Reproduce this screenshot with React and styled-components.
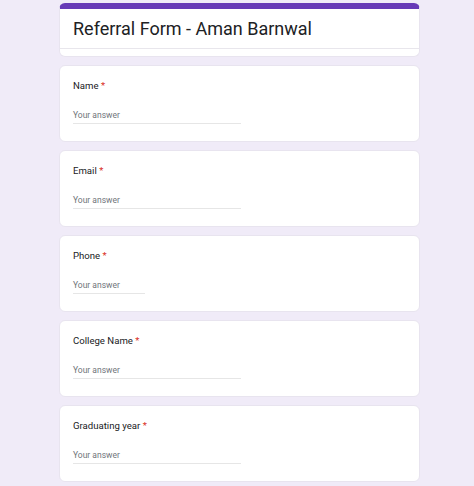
import styled, { createGlobalStyle } from "styled-components";

const GlobalStyle = createGlobalStyle`
    html, body {
        margin: 0;
        padding: 0;
        background: #f0ebf8;
        font-family: Roboto, "Liberation Sans", Arial, sans-serif;
    }
`;

const questions = [
    { label: "Name", width: 168 },
    { label: "Email", width: 168 },
    { label: "Phone", width: 72 },
    { label: "College Name", width: 168 },
    { label: "Graduating year", width: 168 },
];

const App = () => {
    return (
        <>
            <GlobalStyle />
            <Page>
                <TitleCard>
                    <Title>Referral Form - Aman Barnwal</Title>
                    <Divider />
                </TitleCard>
                {questions.map((q) => (
                    <Card key={q.label}>
                        <Label>
                            {q.label} <Required>*</Required>
                        </Label>
                        <Answer $width={q.width}>Your answer</Answer>
                    </Card>
                ))}
            </Page>
        </>
    );
};

export default App;

const Page = styled.div`
    width: 361px;
    margin-left: 59px;
    padding-top: 3px;
    display: flex;
    flex-direction: column;
    gap: 8px;
`;

const Card = styled.div`
    background: #fff;
    border: 1px solid #e8e4ef;
    border-radius: 6px;
    padding: 14px 13px 0;
    box-sizing: border-box;
    height: 77px;
`;

const TitleCard = styled.div`
    background: #fff;
    border: 1px solid #e8e4ef;
    border-top: 6px solid #673ab7;
    border-radius: 6px;
    box-sizing: border-box;
    height: 54px;
    padding-top: 10px;
`;

const Title = styled.div`
    font-size: 18px;
    line-height: 20px;
    color: #202124;
    padding: 0 13px;
`;

const Divider = styled.div`
    height: 1px;
    background: #e8e6ec;
    margin-top: 9px;
`;

const Label = styled.div`
    font-size: 9.6px;
    line-height: 12px;
    color: #202124;
`;

const Required = styled.span`
    color: #d93025;
`;

const Answer = styled.div`
    margin-top: 18px;
    width: ${(p) => p.$width}px;
    font-size: 8.5px;
    line-height: 10px;
    color: #70757a;
    padding-bottom: 3px;
    border-bottom: 1px solid #e6e6e6;
`;
